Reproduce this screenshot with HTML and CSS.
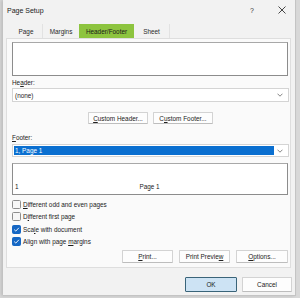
FILE: index.html
```html
<!DOCTYPE html>
<html>
<head>
<meta charset="utf-8">
<link rel="stylesheet" href="styles.css">
</head>
<body>
<div class="dialog">
  <div class="titlebar">
    <span class="title">Page Setup</span>
    <span class="help">?</span>
    <svg class="close" width="8" height="8" viewBox="0 0 8 8"><path d="M0.5 0.5L7.5 7.5M7.5 0.5L0.5 7.5" stroke="#333" stroke-width="0.9"/></svg>
  </div>
  <div class="tabs">
    <span class="tab t-page">Page</span>
    <span class="tab t-margins">Margins</span>
    <span class="tab active">Header/Footer</span>
    <span class="tab t-sheet">Sheet</span>
  </div>
  <div class="panel">
    <div class="preview header-prev"></div>
    <div class="label">He<u>a</u>der:</div>
    <div class="select">
      <span class="sel-text">(none)</span>
      <svg class="arrow" width="6" height="4" viewBox="0 0 6 4"><path d="M0.5 0.7L3 3.2L5.5 0.7" fill="none" stroke="#666" stroke-width="0.8"/></svg>
    </div>
    <div class="btnrow center">
      <span class="btn custom"><u>C</u>ustom Header...</span>
      <span class="btn custom">C<u>u</u>stom Footer...</span>
    </div>
    <div class="label label-footer"><u>F</u>ooter:</div>
    <div class="select selected">
      <span class="sel-text">1, Page 1</span>
      <svg class="arrow" width="6" height="4" viewBox="0 0 6 4"><path d="M0.5 0.7L3 3.2L5.5 0.7" fill="none" stroke="#666" stroke-width="0.8"/></svg>
    </div>
    <div class="preview footer-prev">
      <span class="fl">1</span>
      <span class="fc">Page 1</span>
      <span class="fr"></span>
    </div>
    <div class="checks">
      <div class="check"><span class="box"></span><span><u>D</u>ifferent odd and even pages</span></div>
      <div class="check"><span class="box"></span><span>D<u>i</u>fferent first page</span></div>
      <div class="check"><span class="box on"><svg width="7" height="7" viewBox="0 0 7 7"><path d="M1.2 3.6L2.8 5.1L5.9 1.8" fill="none" stroke="#fff" stroke-width="0.9"/></svg></span><span>Sca<u>l</u>e with document</span></div>
      <div class="check"><span class="box on"><svg width="7" height="7" viewBox="0 0 7 7"><path d="M1.2 3.6L2.8 5.1L5.9 1.8" fill="none" stroke="#fff" stroke-width="0.9"/></svg></span><span>Align with page <u>m</u>argins</span></div>
    </div>
    <div class="btnrow right">
      <span class="btn b-print"><u>P</u>rint...</span>
      <span class="btn b-preview">Print Previe<u>w</u></span>
      <span class="btn b-options"><u>O</u>ptions...</span>
    </div>
  </div>
  <div class="actions">
    <span class="btn ok">OK</span>
    <span class="btn cancel">Cancel</span>
  </div>
</div>
</body>
</html>
```
FILE: styles.css
```css
html, body {
  margin: 0;
  padding: 0;
}
body {
  width: 300px;
  height: 298px;
  background: #d8d8d8;
  font-family: "Liberation Sans", Arial, sans-serif;
  font-size: 6.4px;
  color: #1b1b1b;
  overflow: hidden;
}
u {
  text-decoration: underline;
  text-underline-offset: 1px;
  text-decoration-thickness: 0.5px;
}
.dialog {
  margin-left: 3px;
  width: 292px;
  height: 295px;
  background: #f2f2f2;
  border-right: 1px solid #c4c4c4;
  border-bottom: 1px solid #c4c4c4;
  box-shadow: -2px 0 3px rgba(0,0,0,0.12);
  display: flex;
  flex-direction: column;
}
.titlebar {
  height: 20px;
  display: flex;
  align-items: center;
  padding-left: 4px;
}
.title {
  font-size: 7px;
  color: #222;
  flex: 1;
}
.help {
  font-size: 7px;
  color: #333;
  margin-right: 24px;
}
.close {
  margin-right: 9px;
}
.tabs {
  margin-top: 4px;
  margin-left: 7px;
  height: 14px;
  display: flex;
}
.tab {
  height: 14px;
  display: flex;
  align-items: center;
  justify-content: center;
  color: #2a2a2a;
  box-sizing: border-box;
}
.t-page { width: 33px; border-right: 1px solid #e2e2e2; }
.t-margins { width: 36px; }
.tab.active {
  width: 55px;
  background: #8dc43f;
  color: #1b1b1b;
}
.t-sheet { width: 36px; border-right: 1px solid #e2e2e2; }
.panel {
  margin-left: 3px;
  width: 285px;
  height: 230px;
  box-sizing: border-box;
  background: #fafafa;
  border: 1px solid #dedede;
  padding: 0 1px 4px 5px;
  display: flex;
  flex-direction: column;
}
.preview {
  width: 276px;
  box-sizing: border-box;
  background: #ffffff;
  border: 1px solid #8c8c8c;
  border-top-color: #a8a8a8;
}
.header-prev {
  margin-top: 3px;
  height: 34px;
}
.label {
  margin-top: 3px;
  height: 8px;
  line-height: 8px;
  color: #222;
}
.label-footer {
  margin-top: 10px;
}
.select {
  margin-top: 1px;
  width: 277px;
  height: 14px;
  box-sizing: border-box;
  background: #ffffff;
  border: 1px solid #d4d4d4;
  display: flex;
  align-items: center;
  padding: 1px;
}
.sel-text {
  flex: 1;
  height: 100%;
  display: flex;
  align-items: center;
  padding-left: 1px;
}
.arrow {
  margin: 0 4px 0 3px;
}
.select.selected {
  margin-top: 2px;
  height: 13px;
}
.select.selected .sel-text {
  background: #0a6fd0;
  color: #ffffff;
}
.btnrow {
  display: flex;
  gap: 5px;
}
.btnrow.center {
  margin-top: 10px;
  justify-content: center;
}
.btnrow.right {
  margin-top: 2px;
  justify-content: flex-end;
  padding-right: 1px;
  gap: 6px;
}
.btn {
  height: 12px;
  box-sizing: border-box;
  background: #fdfdfd;
  border: 1px solid #d3d3d3;
  border-bottom-color: #bdbdbd;
  border-radius: 1px;
  display: flex;
  align-items: center;
  justify-content: center;
  color: #222;
}
.custom {
  width: 60px;
}
.btnrow.right .btn {
  height: 13px;
}
.b-print { width: 51px; }
.b-preview { width: 51px; }
.b-options { width: 52px; }
.footer-prev {
  margin-top: 6px;
  height: 32px;
  display: flex;
  align-items: flex-end;
  padding: 0 3px 4px 2px;
}
.fl, .fr { flex: 1; }
.fc { text-align: center; }
.checks {
  margin-top: 3px;
  display: flex;
  flex-direction: column;
}
.check {
  height: 12.5px;
  display: flex;
  align-items: center;
  gap: 2px;
}
.box {
  width: 9px;
  height: 9px;
  box-sizing: border-box;
  border: 1px solid #8e8e8e;
  border-radius: 1.5px;
  background: #f7f7f7;
  display: flex;
  align-items: center;
  justify-content: center;
}
.box.on {
  background: #1567c4;
  border-color: #1567c4;
}
.actions {
  display: flex;
  justify-content: flex-end;
  gap: 5px;
  padding-right: 3px;
  margin-top: 9px;
}
.ok, .cancel {
  height: 15px;
}
.ok {
  width: 52px;
  background: #cde3f4;
  border: 1.5px solid #3a6479;
}
.cancel {
  width: 50px;
  background: #fdfdfd;
}
```
